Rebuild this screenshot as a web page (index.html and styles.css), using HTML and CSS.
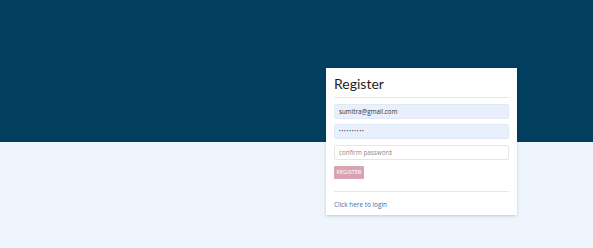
FILE: index.html
```html
<!DOCTYPE html>
<html>
<head>
<meta charset="utf-8">
<link rel="stylesheet" href="styles.css">
</head>
<body>
<div class="page">
  <div class="card">
    <h1 class="title">Register</h1>
    <div class="rule"></div>
    <div class="field filled">sumitra@gmail.com</div>
    <div class="field filled dots">••••••••••</div>
    <div class="field placeholder">confirm password</div>
    <div class="btn">REGISTER</div>
    <div class="rule rule-bottom"></div>
    <a class="link" href="#">Click here to login</a>
  </div>
</div>
</body>
</html>
```
FILE: styles.css
```css
html, body {
  margin: 0;
  padding: 0;
}
body {
  font-family: "Open Sans", Lato, sans-serif;
  background: #eef5fd;
}
.page {
  width: 593px;
  height: 248px;
  background: linear-gradient(to bottom, #023f5f 0, #023f5f 142px, #eef5fd 142px, #eef5fd 100%);
  padding-top: 68px;
  box-sizing: border-box;
  overflow: hidden;
}
.card {
  margin-left: 326px;
  width: 191px;
  box-sizing: border-box;
  background: #fff;
  padding: 8px 8px 6px 8px;
  box-shadow: 0 1px 3px rgba(0, 0, 0, 0.18);
  display: flex;
  flex-direction: column;
}
.title {
  margin: 0;
  font-family: Lato, "Open Sans", sans-serif;
  font-size: 14px;
  line-height: 16px;
  font-weight: 400;
  color: #1e1e1e;
}
.rule {
  height: 1px;
  background: #e6e8ea;
  margin-top: 5px;
}
.field {
  margin-top: 6px;
  height: 15px;
  box-sizing: border-box;
  border: 1px solid #e4e7ea;
  border-radius: 2px;
  padding: 0 4px;
  font-size: 6.3px;
  line-height: 13px;
  color: #333;
}
.field + .field {
  margin-top: 5px;
}
.field.placeholder {
  margin-top: 6px;
}
.filled {
  background: #e8f0fe;
  border-color: #e2e9f6;
}
.dots {
  font-size: 4.4px;
  letter-spacing: 0.9px;
  color: #222;
}
.placeholder {
  color: #8a8a8a;
  background: #fff;
}
.btn {
  margin-top: 6px;
  align-self: flex-start;
  width: 30px;
  height: 13px;
  box-sizing: border-box;
  background: #d9a3b1;
  color: #fff;
  font-size: 5.6px;
  line-height: 13px;
  text-align: center;
  border-radius: 1px;
}
.rule-bottom {
  margin-top: 12px;
}
.link {
  margin-top: 8px;
  font-size: 6.4px;
  line-height: 9px;
  color: #3f6e9c;
  text-decoration: none;
}
```
